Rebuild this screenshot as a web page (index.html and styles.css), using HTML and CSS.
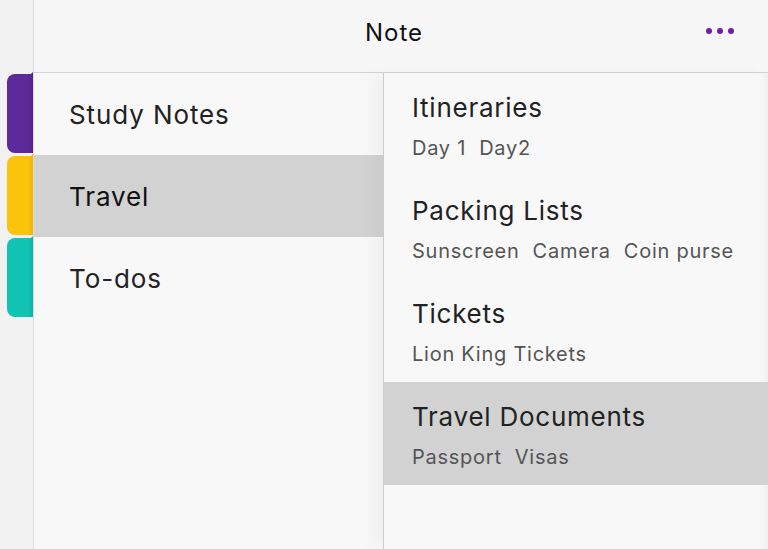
FILE: index.html
```html
<!DOCTYPE html>
<html lang="en">
<head>
<meta charset="utf-8">
<title>Note</title>
<link rel="stylesheet" href="styles.css">
</head>
<body>
<div class="app">
  <aside class="rail">
    <div class="tab tab-purple"></div>
    <div class="tab tab-yellow"></div>
    <div class="tab tab-teal"></div>
  </aside>
  <main class="main">
    <header class="header">
      <h1 class="title">Note</h1>
      <button class="more" aria-label="More"><span></span><span></span><span></span></button>
    </header>
    <div class="content">
      <nav class="sections">
        <div class="section">Study Notes</div>
        <div class="section selected">Travel</div>
        <div class="section">To-dos</div>
      </nav>
      <section class="pages">
        <div class="page">
          <div class="page-title">Itineraries</div>
          <div class="page-sub"><span>Day 1</span><span>Day2</span></div>
        </div>
        <div class="page">
          <div class="page-title">Packing Lists</div>
          <div class="page-sub"><span>Sunscreen</span><span>Camera</span><span>Coin purse</span></div>
        </div>
        <div class="page">
          <div class="page-title">Tickets</div>
          <div class="page-sub"><span>Lion King Tickets</span></div>
        </div>
        <div class="page selected">
          <div class="page-title">Travel Documents</div>
          <div class="page-sub"><span>Passport</span><span>Visas</span></div>
        </div>
      </section>
    </div>
  </main>
</div>
</body>
</html>
```

FILE: styles.css
```css
* { box-sizing: border-box; }
html, body {
  margin: 0;
  padding: 0;
  width: 768px;
  height: 549px;
  overflow: hidden;
  background: #f8f8f8;
  font-family: "Inter", "Open Sans", "Liberation Sans", sans-serif;
}
.app {
  display: flex;
  width: 768px;
  height: 549px;
}
.rail {
  width: 34px;
  flex: none;
  background: #f2f2f2;
  border-right: 1px solid #dcdcdc;
  display: flex;
  flex-direction: column;
  align-items: flex-end;
  gap: 3px;
  padding-top: 74px;
}
.tab {
  position: relative;
  width: 26px;
  height: 79px;
  border-radius: 8px 0 0 8px;
}
.tab::after {
  content: "";
  position: absolute;
  top: -4px;
  right: 0;
  width: 4px;
  height: 4px;
  background: radial-gradient(circle at 0 0, transparent 4px, var(--c) 4.5px);
}
.tab-purple { --c: #5c2a99; background: linear-gradient(to right, #5d2a9b 80%, #52238a); }
.tab-yellow { --c: #fbc10a; background: linear-gradient(to right, #fcc30d 80%, #eeb400); }
.tab-teal { --c: #0fc2b2; background: linear-gradient(to right, #12c4b4 80%, #0bb3a4); }

.main {
  flex: 1;
  display: flex;
  flex-direction: column;
  min-width: 0;
}
.header {
  height: 73px;
  flex: none;
  display: flex;
  align-items: center;
  justify-content: center;
  position: relative;
  background: #f7f7f7;
  border-bottom: 1px solid #d4d4d4;
  padding-right: 14px;
}
.title {
  margin: 0 0 7px;
  font-size: 24px;
  font-weight: 400;
  color: #111;
  letter-spacing: 1px;
}
.more {
  position: absolute;
  right: 34px;
  top: 28px;
  display: flex;
  gap: 5px;
  padding: 0;
  border: 0;
  background: none;
}
.more span {
  width: 6px;
  height: 6px;
  border-radius: 50%;
  background: #7719aa;
}
.content {
  flex: 1;
  display: flex;
  min-height: 0;
}
.sections {
  width: 349px;
  flex: none;
  background: #f8f8f8;
}
.section {
  height: 82px;
  display: flex;
  align-items: center;
  padding-left: 35px;
  font-size: 26px;
  color: #222;
  letter-spacing: 0.9px;
}
.section.selected {
  background: #d2d2d2;
  color: #111;
}
.pages {
  flex: 1;
  background: #f8f8f8;
  border-left: 1px solid #cbcbcb;
  box-shadow: -10px 0 18px rgba(0, 0, 0, 0.035), inset -8px 0 10px -6px rgba(0, 0, 0, 0.05);
  position: relative;
}
.page {
  height: 103px;
  padding: 18px 0 0 28px;
}
.page.selected {
  background: #d2d2d2;
}
.page-title {
  font-size: 26px;
  line-height: 34px;
  color: #222;
  letter-spacing: 0.75px;
}
.page-sub {
  margin-top: 10px;
  display: flex;
  gap: 13px;
  font-size: 20px;
  line-height: 26px;
  color: #555;
  letter-spacing: 0.75px;
}
```
